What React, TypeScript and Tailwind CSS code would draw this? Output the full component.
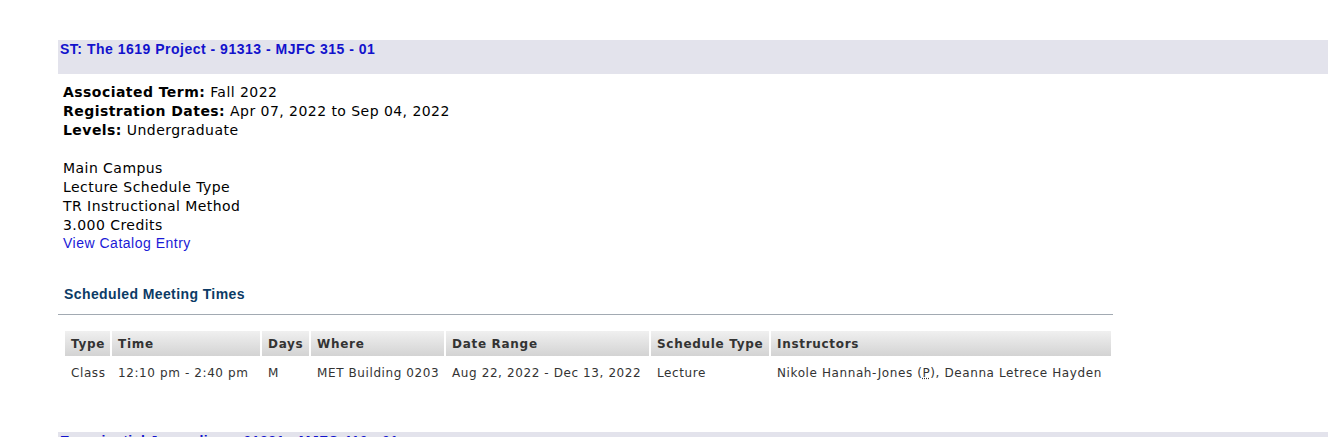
import React from "react";

const verdana = { fontFamily: '"DejaVu Sans", Verdana, sans-serif' };
const arial = { fontFamily: '"Liberation Sans", Arial, sans-serif' };

export default function App() {
  const cols = [
    { h: "Type", w: "w-[45px]" },
    { h: "Time", w: "w-[148px]" },
    { h: "Days", w: "w-[47px]" },
    { h: "Where", w: "w-[133px]" },
    { h: "Date Range", w: "w-[203px]" },
    { h: "Schedule Type", w: "w-[118px]" },
    { h: "Instructors", w: "w-[340px]" },
  ];
  const row = [
    "Class",
    "12:10 pm - 2:40 pm",
    "M",
    "MET Building 0203",
    "Aug 22, 2022 - Dec 13, 2022",
    "Lecture",
  ];
  return (
    <div className="w-[1328px] h-[437px] overflow-hidden bg-white pt-[40px] pl-[58px]">
      <div
        className="h-[34px] bg-[#e3e3ec] pl-[2px] pt-[1px] text-[14px] font-bold text-[#1212cc] leading-[16px] tracking-[0.5px]"
        style={arial}
      >
        ST: The 1619 Project - 91313 - MJFC 315 - 01
      </div>
      <div className="pl-[5px] pt-[9px] text-[14px] leading-[19px] text-black tracking-[0.45px]" style={verdana}>
        <div><span className="font-bold">Associated Term:</span> Fall 2022</div>
        <div><span className="font-bold">Registration Dates:</span> Apr 07, 2022 to Sep 04, 2022</div>
        <div><span className="font-bold">Levels:</span> Undergraduate</div>
        <div className="h-[19px]" />
        <div>Main Campus</div>
        <div>Lecture Schedule Type</div>
        <div>TR Instructional Method</div>
        <div>3.000 Credits</div>
        <div className="text-[#1a1ad6] text-[14px] leading-[17px] tracking-[0.5px]" style={arial}>View Catalog Entry</div>
      </div>
      <div className="pl-[6px] pt-[34px] text-[14px] font-bold text-[#0c3b66] leading-[17px] tracking-[0.4px]" style={arial}>
        Scheduled Meeting Times
      </div>
      <div className="mt-[11px] w-[1055px] border-t border-[#a2aab2]" />
      <div className="pl-[5px] pt-[14px]">
        <table className="table-fixed w-[1050px] border-separate border-spacing-[2px] text-[12px] text-[#333333] tracking-[0.6px]" style={verdana}>
          <thead>
            <tr>
              {cols.map((c) => (
                <th
                  key={c.h}
                  className={`${c.w} h-[25px] pl-[6px] pr-0 text-left font-bold tracking-[0.7px] whitespace-nowrap overflow-visible bg-gradient-to-b from-[#f0f0f0] to-[#d3d3d3]`}
                >
                  {c.h}
                </th>
              ))}
            </tr>
          </thead>
          <tbody>
            <tr>
              {row.map((r, i) => (
                <td key={i} className="h-[28px] pl-[6px] pr-0 pt-[2px] whitespace-nowrap overflow-visible">{r}</td>
              ))}
              <td className="h-[28px] pl-[6px] pr-0 pt-[2px] whitespace-nowrap overflow-visible">
                Nikole Hannah-Jones (<span className="underline decoration-dotted">P</span>), Deanna Letrece Hayden
              </td>
            </tr>
          </tbody>
        </table>
      </div>
      <div
        className="mt-[44px] h-[34px] bg-[#e3e3ec] pl-[2px] pt-[1px] text-[14px] font-bold text-[#1212cc] leading-[16px] tracking-[0.5px]"
        style={arial}
      >
        Experiential Journalism - 91881 - MJFC 410 - 01
      </div>
    </div>
  );
}
